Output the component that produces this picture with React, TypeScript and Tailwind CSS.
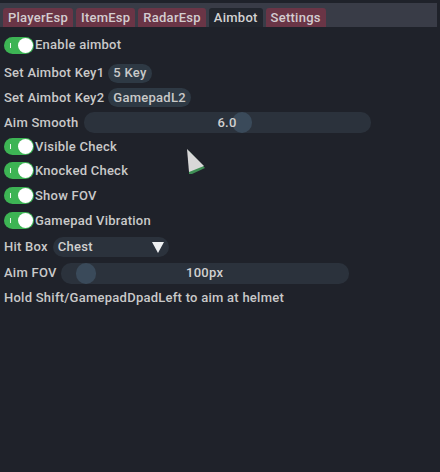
import React from "react";

const font = { fontFamily: "Roboto, 'Noto Sans', sans-serif" };

function Toggle() {
  return (
    <div className="relative w-[30px] h-[17px] rounded-full bg-[#3db454] shrink-0">
      <div className="absolute left-[6px] top-[6px] w-[1px] h-[5px] bg-[#e8f5ea]" />
      <div className="absolute right-[1px] top-[1px] w-[15px] h-[15px] rounded-full bg-white" />
    </div>
  );
}

function ToggleRow({ label, h = "h-[25px]" }: { label: string; h?: string }) {
  return (
    <div className={`flex items-center ${h} pl-[4px] gap-[1px]`}>
      <Toggle />
      <span>{label}</span>
    </div>
  );
}

function Slider({ width, knob, value }: { width: string; knob: number; value: string }) {
  return (
    <div className={`relative h-[21px] ${width} rounded-[10px] bg-[#2b323c]`}>
      <div
        className="absolute top-[0px] w-[20px] h-[21px] rounded-full bg-[#3a4a5a]"
        style={{ left: knob }}
      />
      <div className="absolute inset-0 flex items-center justify-center text-[#d0d0d0]">{value}</div>
    </div>
  );
}

export default function App() {
  const tabs = ["PlayerEsp", "ItemEsp", "RadarEsp", "Aimbot", "Settings"];
  return (
    <div
      className="relative w-[440px] h-[472px] bg-[#1f222a] text-[13px] font-medium tracking-[0.25px] text-[#c9c9c9] overflow-hidden"
      style={font}
    >
      <div className="mt-[3px] mr-[3px] h-[24px] bg-[#393c47] flex items-end gap-[3px] pl-[3px]">
        {tabs.map((t) => (
          <div
            key={t}
            className={`h-[19px] px-[5px] flex items-center rounded-t-[3px] ${
              t === "Aimbot" ? "bg-[#22262e] text-[#d2d2d2]" : "bg-[#6a3546] text-[#d3cdd0]"
            }`}
          >
            {t}
          </div>
        ))}
      </div>

      <div className="flex flex-col pt-[6px]">
        <ToggleRow label="Enable aimbot" h="h-[24px]" />
        <div className="flex items-center h-[24px] pl-[4px] mt-[4px] gap-[4px]">
          <span>Set Aimbot Key1</span>
          <span className="h-[19px] px-[5px] rounded-full bg-[#2e3944] flex items-center">5 Key</span>
        </div>
        <div className="flex items-center h-[25px] pl-[4px] gap-[4px]">
          <span>Set Aimbot Key2</span>
          <span className="h-[19px] px-[5px] rounded-full bg-[#2e3944] flex items-center">GamepadL2</span>
        </div>
        <div className="flex items-center h-[25px] pl-[4px] gap-[5px]">
          <span>Aim Smooth</span>
          <Slider width="w-[287px]" knob={148} value="6.0" />
        </div>
        <ToggleRow label="Visible Check" h="h-[23px]" />
        <ToggleRow label="Knocked Check" />
        <ToggleRow label="Show FOV" />
        <ToggleRow label="Gamepad Vibration" />
        <div className="flex items-center h-[27px] pl-[4px] gap-[5px]">
          <span>Hit Box</span>
          <div className="relative h-[20px] w-[116px] rounded-[10px] bg-[#2b323c] flex items-center pl-[5px]">
            <span className="text-[#d0d0d0]">Chest</span>
            <svg className="absolute right-[5px] top-[5px]" width="12" height="11" viewBox="0 0 12 11">
              <polygon points="0,0 12,0 6,11" fill="#eef0f2" />
            </svg>
          </div>
        </div>
        <div className="flex items-center h-[26px] pl-[4px] gap-[4px]">
          <span>Aim FOV</span>
          <Slider width="w-[288px]" knob={15} value="100px" />
        </div>
        <div className="flex items-center h-[24px] pl-[4px]">
          <span>Hold Shift/GamepadDpadLeft to aim at helmet</span>
        </div>
      </div>

      <svg className="absolute left-[186px] top-[148px]" width="22" height="30" viewBox="0 0 22 30">
        <polygon points="3,3 19,20 6,26 3,26" fill="#3f8f55" />
        <polygon points="1,1 18,18 3,24" fill="#d8d8d8" />
      </svg>
    </div>
  );
}
